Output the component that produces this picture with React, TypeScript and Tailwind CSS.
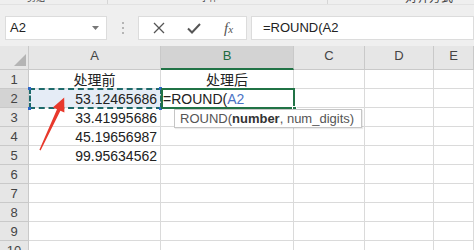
import React from "react";

const FONT = { fontFamily: '"Liberation Sans", "Noto Sans CJK SC", Arial, sans-serif' };

const cols = [
  { key: "A", w: "w-[132px]" },
  { key: "B", w: "w-[133px]" },
  { key: "C", w: "w-[71px]" },
  { key: "D", w: "w-[69px]" },
  { key: "E", w: "w-[40px]" },
];

const data: Record<number, { A?: string; B?: React.ReactNode }> = {
  1: { A: "处理前", B: "处理后" },
  2: { A: "53.12465686" },
  3: { A: "33.41995686" },
  4: { A: "45.19656987" },
  5: { A: "99.95634562" },
};

export default function App() {
  const rows = [1, 2, 3, 4, 5, 6, 7, 8, 9, 10];
  return (
    <div className="relative w-[474px] h-[250px] overflow-hidden bg-white" style={FONT}>
      {/* Toolbar area */}
      <div className="h-[46px] bg-[#efefef] flex flex-col">
        <div className="relative h-[5px] overflow-hidden border-b border-[#e2e2e2]">
          <div className="absolute left-[27px] top-[-8px] text-[9px] text-[#444] leading-[12px]">剪贴</div>
          <div className="absolute left-[107px] top-0 h-[5px] w-px bg-[#d6d6d6]" />
          <div className="absolute left-[200px] top-[-8px] text-[9px] text-[#444] leading-[12px]">字体</div>
          <div className="absolute left-[327px] top-0 h-[5px] w-px bg-[#d6d6d6]" />
          <div className="absolute left-[405px] top-[-8px] text-[12px] text-[#444] leading-[12px]">对齐方式</div>
        </div>
        <div className="mt-[11px] h-[24px] flex items-stretch">
          <div className="ml-[5px] w-[102px] bg-white border border-[#dcdcdc] flex items-center justify-between pl-[4px] pr-[7px]">
            <span className="text-[13px] text-[#222]">A2</span>
            <svg width="7" height="4" viewBox="0 0 7 4">
              <path d="M0 0 L7 0 L3.5 4 Z" fill="#777" />
            </svg>
          </div>
          <div className="w-[31px] flex flex-col items-center justify-center gap-[3px]">
            <div className="w-[2px] h-[2px] bg-[#b5b5b5]" />
            <div className="w-[2px] h-[2px] bg-[#b5b5b5]" />
            <div className="w-[2px] h-[2px] bg-[#b5b5b5]" />
          </div>
          <div className="w-[109px] bg-white border border-[#dcdcdc] flex items-center">
            <div className="w-[37px] flex justify-center pl-[2px]">
              <svg width="12" height="12" viewBox="0 0 12 12">
                <path d="M1 1 L11 11 M11 1 L1 11" stroke="#555" strokeWidth="1.3" />
              </svg>
            </div>
            <div className="w-[35px] flex justify-center">
              <svg width="14" height="11" viewBox="0 0 14 11">
                <path d="M1 5.5 L5 9.5 L13 1" stroke="#555" strokeWidth="2" fill="none" />
              </svg>
            </div>
            <div className="w-[35px] flex justify-center">
              <span
                className="text-[15px] italic text-[#555] leading-none"
                style={{ fontFamily: '"Liberation Serif", "DejaVu Serif", serif' }}
              >
                f<span className="text-[11px]">x</span>
              </span>
            </div>
          </div>
          <div className="ml-[4px] flex-1 bg-white border border-[#dcdcdc] flex items-center pl-[11px]">
            <span className="text-[13px] text-[#222]">=ROUND(A2</span>
          </div>
        </div>
      </div>

      {/* Column header */}
      <div className="flex h-[24px]">
        <div className="w-[29px] bg-[#e6e6e6] border-r border-b border-[#c9c9c9] relative">
          <svg className="absolute right-[2px] bottom-[3px]" width="12" height="12" viewBox="0 0 12 12">
            <path d="M12 0 L12 12 L0 12 Z" fill="#b4b4b4" />
          </svg>
        </div>
        {cols.map((c) =>
          c.key === "B" ? (
            <div
              key={c.key}
              className={`${c.w} bg-[#d3d3d3] border-r border-[#c9c9c9] border-b-2 border-b-[#217346] flex items-end justify-center pb-[3px] text-[13px] text-[#1e6b40]`}
            >
              B
            </div>
          ) : (
            <div
              key={c.key}
              className={`${c.w} bg-[#e6e6e6] border-r border-b border-[#c9c9c9] flex items-end justify-center pb-[4px] text-[13px] text-[#444]`}
            >
              {c.key}
            </div>
          )
        )}
      </div>

      {/* Rows */}
      {rows.map((r) => (
        <div key={r} className="flex h-[19px]">
          <div
            className={`w-[29px] ${r === 2 ? "bg-[#d3d3d3]" : "bg-[#e6e6e6]"} border-r border-b border-[#c9c9c9] flex items-center justify-center text-[13px] text-[#444] pt-[1px]`}
          >
            {r}
          </div>
          {cols.map((c) => {
            let content: React.ReactNode = null;
            let cls = "";
            if (c.key === "A" && data[r]?.A) {
              content = data[r].A;
              cls = r === 1 ? "justify-center text-[14px]" : "justify-end pr-[3px] text-[14px]";
            }
            if (c.key === "B" && r === 1) {
              content = "处理后";
              cls = "justify-center text-[14px]";
            }
            if (c.key === "B" && r === 2) {
              content = (
                <>
                  =ROUND(<span className="text-[#4a72c4]">A2</span>
                </>
              );
              cls = "justify-start pl-[2px] text-[14px]";
            }
            const bg = c.key === "A" && r === 2 ? "bg-[#e5ecf6]" : "bg-white";
            return (
              <div
                key={c.key}
                className={`${c.w} ${bg} border-r border-b border-[#dadada] flex items-center pt-[2px] text-[#222] whitespace-nowrap overflow-visible ${cls}`}
              >
                {content}
              </div>
            );
          })}
        </div>
      ))}

      {/* A2 marching ants */}
      <div className="absolute left-[29px] top-[88px] w-[133px] h-[21px] border-2 border-dashed border-[#1d6a6a]" />
      <div className="absolute left-[28px] top-[87px] w-[3px] h-[3px] bg-[#2b66c8]" />
      <div className="absolute left-[159px] top-[87px] w-[3px] h-[3px] bg-[#2b66c8]" />
      <div className="absolute left-[28px] top-[107px] w-[3px] h-[3px] bg-[#2b66c8]" />
      <div className="absolute left-[159px] top-[107px] w-[3px] h-[3px] bg-[#2b66c8]" />

      {/* B2 selection */}
      <div className="absolute left-[161px] top-[88px] w-[134px] h-[21px] border-2 border-[#217346]" />
      <div className="absolute left-[292px] top-[106px] w-[5px] h-[5px] bg-[#217346] border border-white" />

      {/* Tooltip */}
      <div className="absolute left-[174px] top-[109px] w-[188px] h-[19px] bg-white border border-[#c6c6c6] flex items-center pl-[5px] text-[13px] text-[#555] whitespace-nowrap shadow-[1px_1px_1px_rgba(0,0,0,0.08)]">
        ROUND(<span className="font-bold text-[#333]">number</span>, num_digits)
      </div>

      {/* Red arrow */}
      <svg className="absolute left-0 top-0 pointer-events-none" width="474" height="250" viewBox="0 0 474 250">
        <polygon
          points="39.4,149.8 57.0,109.2 52.8,107.4 64.2,97.6 64.4,112.6 60.4,110.8 40.6,150.4"
          fill="#e8392c"
        />
      </svg>
    </div>
  );
}
